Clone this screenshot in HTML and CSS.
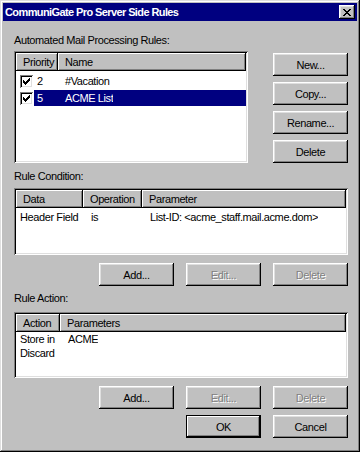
FILE: index.html
```html
<!DOCTYPE html>
<html lang="en">
<head>
    <meta charset="UTF-8">
    <title>CommuniGate Pro Server Side Rules</title>
    <link rel="stylesheet" href="styles.css">
</head>
<body>

<div class="window">
    <div class="titlebar">
        <span class="title">CommuniGate Pro Server Side Rules</span>
        <button class="close-btn">
            <svg width="8" height="7" viewBox="0 0 8 7" shape-rendering="crispEdges">
                <path d="M0 0h2v1h-2zM6 0h2v1h-2zM1 1h2v1h-2zM5 1h2v1h-2zM2 2h4v1h-4zM3 3h2v1h-2zM2 4h4v1h-4zM1 5h2v1h-2zM5 5h2v1h-2zM0 6h2v1h-2zM6 6h2v1h-2z" fill="#000"/>
            </svg>
        </button>
    </div>

    <div class="dialog-body">
        <div class="label">Automated Mail Processing Rules:</div>
        <div class="rules-area">
            <div class="listview rules-list">
                <div class="lv-head">
                    <div class="lv-col col-priority">Priority</div>
                    <div class="lv-col col-fill">Name</div>
                </div>
                <div class="lv-row check-row">
                    <span class="checkbox"><svg width="7" height="7" viewBox="0 0 7 7" shape-rendering="crispEdges"><path d="M6 0h1v1h-1zM5 1h2v1h-2zM0 2h1v1h-1zM4 2h3v1h-3zM0 3h2v1h-2zM3 3h3v1h-3zM0 4h5v1h-5zM1 5h3v1h-3zM2 6h1v1h-1z" fill="#000"/></svg></span>
                    <div class="row-cells">
                        <span class="cell cell-prio">2</span>
                        <span class="cell">#Vacation</span>
                    </div>
                </div>
                <div class="lv-row check-row">
                    <span class="checkbox"><svg width="7" height="7" viewBox="0 0 7 7" shape-rendering="crispEdges"><path d="M6 0h1v1h-1zM5 1h2v1h-2zM0 2h1v1h-1zM4 2h3v1h-3zM0 3h2v1h-2zM3 3h3v1h-3zM0 4h5v1h-5zM1 5h3v1h-3zM2 6h1v1h-1z" fill="#000"/></svg></span>
                    <div class="row-cells selected">
                        <span class="cell cell-prio">5</span>
                        <span class="cell">ACME List</span>
                    </div>
                </div>
            </div>
            <div class="side-buttons">
                <button class="btn">New...</button>
                <button class="btn">Copy...</button>
                <button class="btn">Rename...</button>
                <button class="btn">Delete</button>
            </div>
        </div>

        <div class="label label-condition">Rule Condition:</div>
        <div class="listview condition-list">
            <div class="lv-head">
                <div class="lv-col col-data">Data</div>
                <div class="lv-col col-op">Operation</div>
                <div class="lv-col col-fill">Parameter</div>
            </div>
            <div class="lv-row first-row">
                <span class="cell first col-data">Header Field</span>
                <span class="cell col-op">is</span>
                <span class="cell">List-ID: &lt;acme_staff.mail.acme.dom&gt;</span>
            </div>
        </div>
        <div class="button-row">
            <button class="btn">Add...</button>
            <button class="btn" disabled>Edit...</button>
            <button class="btn" disabled>Delete</button>
        </div>

        <div class="label label-action">Rule Action:</div>
        <div class="listview action-list">
            <div class="lv-head">
                <div class="lv-col col-action">Action</div>
                <div class="lv-col col-fill">Parameters</div>
            </div>
            <div class="lv-row small-row">
                <span class="cell first col-action">Store in</span>
                <span class="cell">ACME</span>
            </div>
            <div class="lv-row small-row">
                <span class="cell first col-action">Discard</span>
                <span class="cell"></span>
            </div>
        </div>
        <div class="button-row">
            <button class="btn">Add...</button>
            <button class="btn" disabled>Edit...</button>
            <button class="btn" disabled>Delete</button>
        </div>
        <div class="button-row footer-row">
            <button class="btn btn-default">OK</button>
            <button class="btn">Cancel</button>
        </div>
    </div>
</div>

</body>
</html>
```

FILE: styles.css
```css
* {
    box-sizing: border-box;
}

body {
    margin: 0;
    font-family: "Liberation Sans", Arial, sans-serif;
    font-size: 11px;
    letter-spacing: -0.4px;
    color: #000000;
}

.window {
    width: 360px;
    height: 452px;
    background-color: #c0c0c0;
    padding: 3px;
    box-shadow: inset -1px -1px #000000, inset 1px 1px #dfdfdf,
                inset -2px -2px #808080, inset 2px 2px #ffffff;
}

.titlebar {
    height: 18px;
    background-color: #000080;
    color: #ffffff;
    display: flex;
    align-items: center;
    justify-content: space-between;
    padding: 0 2px;
}

.title {
    font-weight: bold;
    font-size: 11px;
    letter-spacing: -0.6px;
}

.close-btn {
    width: 16px;
    height: 14px;
    padding: 0;
    border: none;
    background-color: #c0c0c0;
    display: flex;
    align-items: center;
    justify-content: center;
    box-shadow: inset -1px -1px #000000, inset 1px 1px #ffffff,
                inset -2px -2px #808080, inset 2px 2px #dfdfdf;
}

.dialog-body {
    padding: 13px 9px 0 11px;
}

.label {
    height: 13px;
    line-height: 13px;
    margin-bottom: 4px;
}

.label-condition {
    margin-top: 7px;
    margin-bottom: 5px;
}

.label-action {
    margin-top: 6px;
    margin-bottom: 7px;
}

/* List views */
.listview {
    background-color: #ffffff;
    padding: 2px;
    box-shadow: inset 1px 1px #808080, inset -1px -1px #ffffff,
                inset 2px 2px #000000, inset -2px -2px #dfdfdf;
}

.rules-list {
    width: 234px;
    height: 112px;
}

.condition-list {
    height: 67px;
}

.action-list {
    height: 66px;
}

.lv-head {
    display: flex;
    height: 18px;
}

.lv-col {
    background-color: #c0c0c0;
    height: 18px;
    line-height: 18px;
    padding-left: 7px;
    white-space: nowrap;
    overflow: hidden;
    box-shadow: inset -1px -1px #000000, inset 1px 1px #ffffff,
                inset -2px -2px #808080;
}

.col-priority { width: 42px; flex: none; }
.col-data { width: 67px; flex: none; }
.col-op { width: 59px; flex: none; }
.col-action { width: 44px; flex: none; }
.col-fill { flex: 1; }

.lv-row {
    display: flex;
    height: 16px;
    line-height: 16px;
    white-space: nowrap;
}

.first-row {
    margin-top: 1px;
}

.small-row {
    height: 14px;
    line-height: 14px;
}

.cell {
    padding-left: 8px;
    overflow: hidden;
}

.cell.first {
    padding-left: 4px;
}

.check-row {
    align-items: center;
    margin-top: 2px;
}

.check-row + .check-row {
    margin-top: 1px;
}

.checkbox {
    width: 13px;
    height: 13px;
    margin-left: 4px;
    flex: none;
    background-color: #ffffff;
    display: flex;
    align-items: center;
    justify-content: center;
    box-shadow: inset 1px 1px #808080, inset -1px -1px #ffffff,
                inset 2px 2px #000000, inset -2px -2px #dfdfdf;
}

.row-cells {
    display: flex;
    flex: 1;
    height: 16px;
    margin-left: 1px;
}

.row-cells .cell {
    padding-left: 3px;
}

.row-cells .cell-prio {
    width: 28px;
}

.selected {
    background-color: #000080;
    color: #ffffff;
}

/* Buttons */
.side-buttons {
    display: flex;
    flex-direction: column;
    gap: 6px;
    margin-top: 2px;
}

.rules-area {
    display: flex;
    justify-content: space-between;
    align-items: flex-start;
}

.btn {
    width: 75px;
    height: 23px;
    padding: 0;
    border: none;
    background-color: #c0c0c0;
    font-family: "Liberation Sans", Arial, sans-serif;
    font-size: 11px;
    letter-spacing: -0.4px;
    color: #000000;
    box-shadow: inset -1px -1px #000000, inset 1px 1px #ffffff,
                inset -2px -2px #808080, inset 2px 2px #dfdfdf;
}

.btn:disabled {
    color: #808080;
    text-shadow: 1px 1px #ffffff;
}

.btn-default {
    box-shadow: inset 0 0 0 1px #000000, inset -2px -2px #000000,
                inset 2px 2px #ffffff, inset -3px -3px #808080;
}

.button-row {
    display: flex;
    justify-content: flex-end;
    gap: 12px;
    margin-top: 8px;
}

.footer-row {
    margin-top: 6px;
}
```
